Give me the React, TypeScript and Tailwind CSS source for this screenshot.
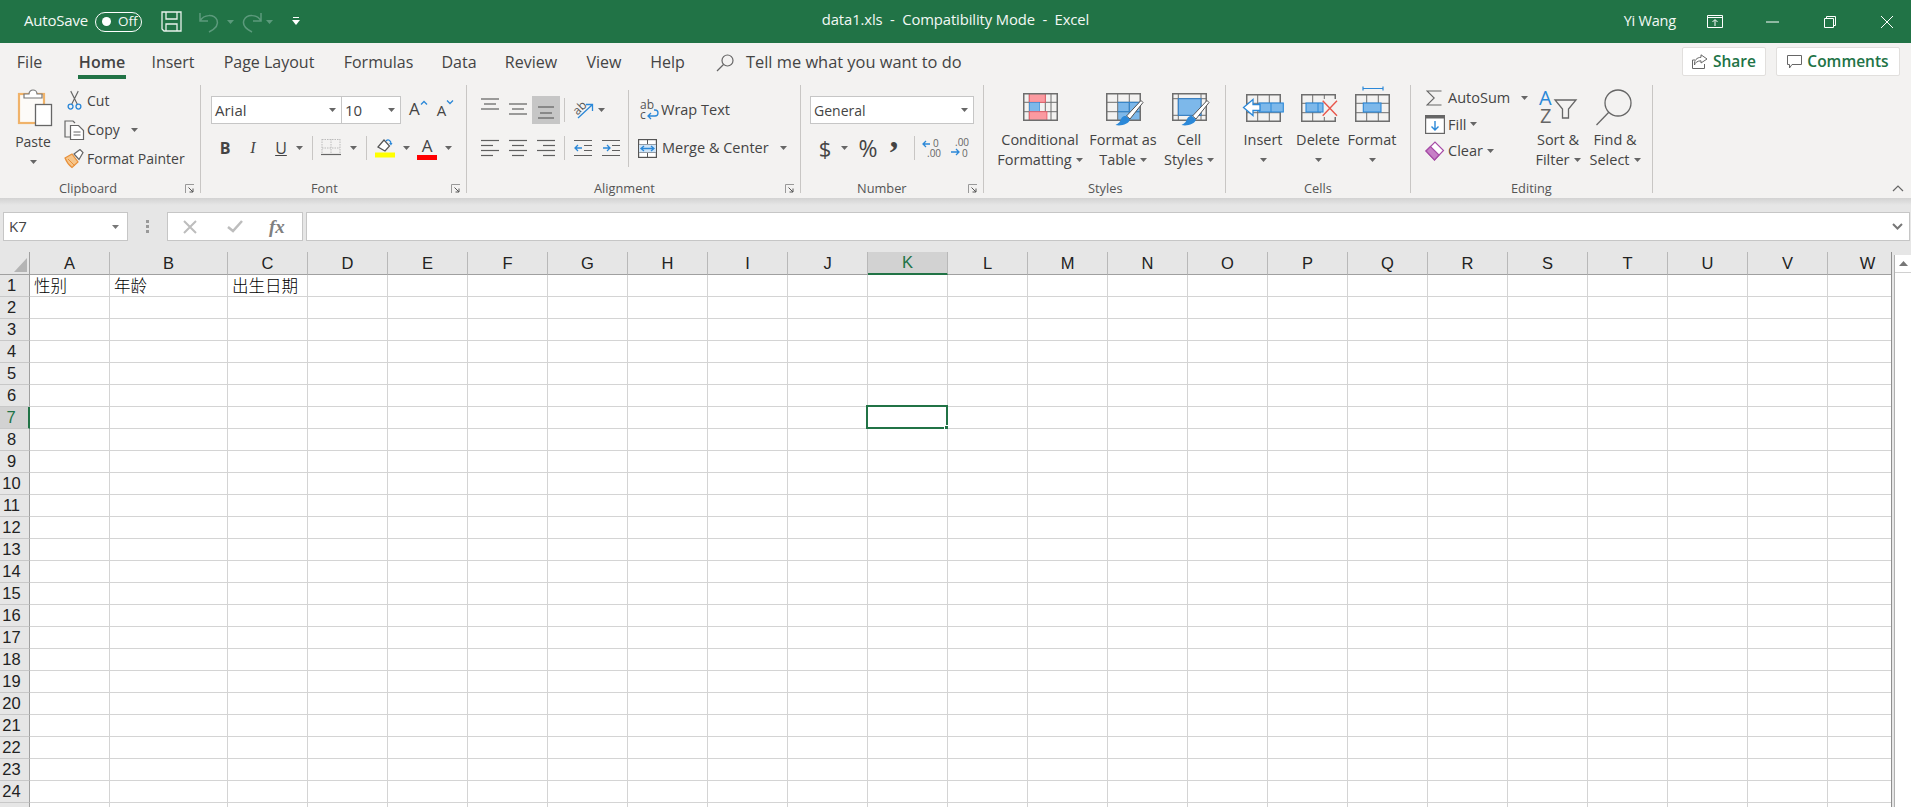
import React from "react";

const COLS = ["A","B","C","D","E","F","G","H","I","J","K","L","M","N","O","P","Q","R","S","T","U","V","W"];
const ROWS = Array.from({ length: 25 }, (_, i) => i + 1);
const TEXTS: Record<string, string> = { A1: "性别", B1: "年龄", C1: "出生日期" };

const G = "#5f5f5f";
const B = "#2b88d8";
const LB = "#7db8ea";
const GL = "#6e6e6e";

function Caret({ c = "#666", className = "" }: { c?: string; className?: string }) {
  return (
    <svg width="7" height="4" viewBox="0 0 7 4" className={className}>
      <path d="M0 0h7L3.5 4z" fill={c} />
    </svg>
  );
}

function Lines({ ys }: { ys: [number, number][] }) {
  return (
    <svg width="18" height="28" viewBox="0 0 18 28">
      {ys.map(([y, x], i) => (
        <path key={i} d={`M${x} ${y}H${18 - x}`} stroke={G} strokeWidth="1.2" />
      ))}
    </svg>
  );
}

function LinesL({ rows }: { rows: [number, number][] }) {
  return (
    <svg width="18" height="20" viewBox="0 0 18 20">
      {rows.map(([a, b], i) => (
        <path key={i} d={`M${a} ${2.5 + i * 5}H${b}`} stroke={G} strokeWidth="1.2" />
      ))}
    </svg>
  );
}

function Launcher() {
  return (
    <svg width="10" height="10" viewBox="0 0 10 10">
      <path d="M0.5 9V.5H9" fill="none" stroke="#999" />
      <path d="M3.5 3.5L8 8M8 4.5V8H4.5" fill="none" stroke="#555" />
    </svg>
  );
}

function PasteIcon() {
  return (
    <svg width="40" height="42" viewBox="0 0 40 42">
      <rect x="4" y="6" width="25" height="29" fill="#fdfbf8" stroke="#f0b36a" strokeWidth="2.2" />
      <path d="M9 10V6h5a4 4 0 0 1 8 0h5v4z" fill="#fff" stroke="#777" strokeWidth="1.2" />
      <rect x="20.5" y="16.5" width="16" height="21" fill="#fff" stroke="#666" strokeWidth="1.3" />
    </svg>
  );
}
function CutIcon() {
  return (
    <svg width="15" height="21" viewBox="0 0 16 22">
      <path d="M4 1l7 14M12 1L5 15" stroke="#666" strokeWidth="1.2" fill="none" />
      <circle cx="3.8" cy="17.5" r="2.6" fill="none" stroke={B} strokeWidth="1.4" />
      <circle cx="12.2" cy="17.5" r="2.6" fill="none" stroke={B} strokeWidth="1.4" />
    </svg>
  );
}
function CopyIcon() {
  return (
    <svg width="21" height="20" viewBox="0 0 21 20">
      <path d="M6 17H1V1h8l2 2" fill="none" stroke="#666" strokeWidth="1.2" />
      <path d="M6.5 5.5h8l5 5v9h-13z" fill="#fff" stroke="#666" strokeWidth="1.2" />
      <path d="M9.5 12h7M9.5 15h7" stroke="#666" />
    </svg>
  );
}
function PainterIcon() {
  return (
    <svg width="21" height="20" viewBox="0 0 21 20">
      <path d="M1 9l7-4 6 8-6 5.5C6 17 3 14 1 9z" fill="#f6c58a" stroke="#e8903a" strokeWidth="1.2" />
      <path d="M4 10l7 7" stroke="#e8903a" />
      <path d="M10 5l6-4.5 3 3-4 7z" fill="#fff" stroke="#666" strokeWidth="1.2" />
    </svg>
  );
}
function BorderIcon() {
  return (
    <svg width="20" height="20" viewBox="0 0 20 20">
      <path d="M1 1.5H19M1 10H19M10 1V16M1 1V16M19 1V16" stroke="#bbb" strokeDasharray="1.5 1" fill="none" />
      <path d="M0 16.5H20" stroke="#666" strokeWidth="1.2" />
    </svg>
  );
}
function FillIcon() {
  return (
    <svg width="20" height="20" viewBox="0 0 20 20">
      <path d="M3 9l6-7 5.5 6L10 13z" fill="#fff" stroke="#555" strokeWidth="1.2" />
      <path d="M11 3c2-2 5-1 5 3" fill="none" stroke={B} strokeWidth="1.3" />
      <path d="M14 5l2 2.5L17.5 5z" fill={B} />
      <rect x="0" y="14.5" width="20" height="5" fill="#ffff00" />
    </svg>
  );
}
function OrientIcon() {
  return (
    <svg width="22" height="20" viewBox="0 0 22 20" className="overflow-visible">
      <text x="1" y="13" fontSize="12" fill="#555" fontFamily="Open Sans, sans-serif" transform="rotate(-45 6 10)">ab</text>
      <path d="M5 18L19 5M13 4.5h6.5V11" fill="none" stroke={B} strokeWidth="1.3" />
    </svg>
  );
}
function WrapIcon() {
  return (
    <svg width="20" height="22" viewBox="0 0 20 22" className="overflow-visible">
      <text x="0" y="10" fontSize="12" fill="#555" fontFamily="Open Sans, sans-serif">ab</text>
      <text x="0" y="20" fontSize="12" fill="#555" fontFamily="Open Sans, sans-serif">c</text>
      <path d="M8 17h7c4 0 4-6 0-6h-1M11 14l-3 3 3 3" fill="none" stroke={B} strokeWidth="1.3" />
    </svg>
  );
}
function IndentIcon({ flip }: { flip?: boolean }) {
  return (
    <svg width="18" height="20" viewBox="0 0 18 20">
      <path d="M0 2.5H18M10 7.5H18M10 12.5H18M0 17.5H18" stroke={G} strokeWidth="1.2" />
      {flip ? (
        <path d="M1 10H8M5 7l3 3-3 3" fill="none" stroke={B} strokeWidth="1.3" />
      ) : (
        <path d="M8 10H1M4 7l-3 3 3 3" fill="none" stroke={B} strokeWidth="1.3" />
      )}
    </svg>
  );
}
function MergeIcon() {
  return (
    <svg width="19" height="19" viewBox="0 0 19 19">
      <rect x=".6" y=".6" width="17.8" height="17.8" fill="#fff" stroke="#555" strokeWidth="1.2" />
      <path d="M1 5.5H18M1 13.5H18M9.5 1V5M9.5 14V18" stroke="#555" />
      <rect x="1" y="5.5" width="17" height="8" fill="#cfe4f7" />
      <path d="M3 9.5H16M6 7l-3 2.5L6 12M13 7l3 2.5L13 12" fill="none" stroke={B} strokeWidth="1.3" />
    </svg>
  );
}
function DecIcon({ inc }: { inc?: boolean }) {
  const f = { fontSize: 10, fill: "#666", fontFamily: "Open Sans, sans-serif" };
  return (
    <svg width="20" height="20" viewBox="0 0 20 20" className="overflow-visible">
      {inc ? (
        <>
          <path d="M8 6H1M4 3L1 6l3 3" fill="none" stroke={B} strokeWidth="1.3" />
          <text x="11" y="9" {...f}>0</text>
          <text x="5" y="19" {...f}>.00</text>
        </>
      ) : (
        <>
          <text x="5" y="8" {...f}>.00</text>
          <path d="M1 14H9M6 11l3 3-3 3" fill="none" stroke={B} strokeWidth="1.3" />
          <text x="12" y="19" {...f}>0</text>
        </>
      )}
    </svg>
  );
}

function Outer() {
  return <path d="M.75 .75H34.25V27.25H.75z" fill="none" stroke={GL} strokeWidth="1.5" />;
}
function GridLines() {
  return <path d="M0 9.3H35M0 18.7H35M11.7 0V28M23.3 0V28" stroke={GL} strokeWidth="1" />;
}
function Brush() {
  return (
    <>
      <path d="M35 7.5L37 9.5 24 26 20.5 23z" fill="#fff" stroke="#555" strokeWidth="1" />
      <path d="M20 23L24 26.5C23 31 15 33.5 9.5 32 13 30 14 29 15 26 16 23.5 18 23 20 23z" fill={B} />
    </>
  );
}
function GI({ children }: { children: React.ReactNode }) {
  return (
    <svg width="35" height="28" viewBox="0 0 35 28" className="overflow-visible">
      {children}
    </svg>
  );
}
function CondIcon() {
  return (
    <GI>
      <path d="M0 9.3H35M0 18.7H35M6.3 0V28M22.3 0V28M28 0V28" stroke={GL} strokeWidth="1" />
      <rect x="6.3" y="0.5" width="16" height="8.8" fill="#fb9aa0" stroke="#ea5b66" strokeWidth=".9" />
      <rect x="6.3" y="9.3" width="10.4" height="9.4" fill={LB} stroke={B} strokeWidth=".6" />
      <rect x="6.3" y="18.7" width="17.6" height="8.8" fill="#fb9aa0" stroke="#ea5b66" strokeWidth=".9" />
      <Outer />
    </GI>
  );
}
function TableIcon() {
  return (
    <GI>
      <rect x="11.7" y="9.3" width="23.3" height="18.7" fill={LB} />
      <GridLines />
      <path d="M11.7 9.3H35M11.7 18.7H35M23.3 9.3V28" stroke={B} />
      <Outer />
      <Brush />
    </GI>
  );
}
function StylesIcon() {
  return (
    <GI>
      <path d="M0 5.7H35M0 22.3H35M6.3 0V28M29 0V28" stroke={GL} />
      <rect x="6.3" y="5.7" width="22.7" height="16.6" fill={LB} stroke="#2b7cc8" />
      <Outer />
      <Brush />
    </GI>
  );
}
function InsertIcon() {
  return (
    <GI>
      <GridLines />
      <Outer />
      <rect x="13" y="9" width="24.3" height="9" fill={LB} stroke={B} strokeWidth="1.1" />
      <path d="M25 9V18" stroke={B} />
      <path d="M7 5.5L-2.5 13.5 7 21.5V16.5H14V10.5H7z" fill="#fff" stroke={B} strokeWidth="1.3" />
    </GI>
  );
}
function DeleteIcon() {
  return (
    <GI>
      <GridLines />
      <Outer />
      <rect x="20" y="5" width="17" height="18" fill="#f3f2f1" />
      <rect x="5" y="9" width="17" height="9" fill={LB} stroke={B} strokeWidth="1.1" />
      <path d="M17 9V18" stroke={B} />
      <path d="M21.7 6.7L36 21.7M36 6.7L21.7 21.7" stroke="#e8574c" strokeWidth="1.4" />
    </GI>
  );
}
function FormatIcon() {
  return (
    <GI>
      <path d="M8 -5.5H28M8 -7.5V-3.5M28 -7.5V-3.5" stroke={B} strokeWidth="1.2" />
      <GridLines />
      <Outer />
      <rect x="8.3" y="9" width="17.7" height="9" fill={LB} stroke={B} strokeWidth="1.1" />
    </GI>
  );
}
function SigmaIcon() {
  return (
    <svg width="16" height="16" viewBox="0 0 16 16" fill="none" stroke="#666" strokeWidth="1.1">
      <path d="M15.5 1H1L8.2 8 1 15H15.5" />
    </svg>
  );
}
function FillDownIcon() {
  return (
    <svg width="20" height="19" viewBox="0 0 20 19">
      <rect x=".6" y=".6" width="18.8" height="17.8" fill="#fff" stroke="#666" strokeWidth="1.2" />
      <rect x="1" y="1" width="18" height="2.5" fill="#666" />
      <path d="M10 6v9M6.5 11.5L10 15l3.5-3.5" fill="none" stroke={B} strokeWidth="1.4" />
    </svg>
  );
}
function ClearIcon() {
  return (
    <svg width="20" height="20" viewBox="0 0 20 20">
      <path d="M1 10l9-9 8.5 8.5L9.5 19z" fill="#fff" stroke="#a64ca6" strokeWidth="1.2" />
      <path d="M1 10l4.5-4.5 8.5 8.5-4.5 5z" fill="#c77fc7" stroke="#a64ca6" strokeWidth="1.2" />
    </svg>
  );
}
function SortIcon() {
  return (
    <svg width="44" height="38" viewBox="0 0 44 38" className="overflow-visible">
      <text x="3" y="16" fontSize="20" fill={B} fontFamily="Open Sans, sans-serif">A</text>
      <text x="4" y="34" fontSize="20" fill="#666" fontFamily="Open Sans, sans-serif">Z</text>
      <path d="M19 11H40L32.5 20V29H26.5V20z" fill="none" stroke="#666" strokeWidth="1.3" />
    </svg>
  );
}
function FindIcon() {
  return (
    <svg width="38" height="38" viewBox="0 0 38 38">
      <circle cx="22" cy="14" r="13" fill="none" stroke="#666" strokeWidth="1.3" />
      <path d="M12.8 23.2L0.5 36" stroke="#666" strokeWidth="1.3" />
    </svg>
  );
}

function Group({ w, label, children, labelMl, launcher }: { w: string; label: string; children: React.ReactNode; labelMl: string; launcher?: boolean }) {
  return (
    <section className={`${w} shrink-0 h-[108px] border-r border-[#c8c6c4]`}>
      <div className="h-[92px] flex">{children}</div>
      <div className="h-[24px] flex items-center text-[12.8px] text-[#555]">
        <span className={labelMl}>{label}</span>
        {launcher && <span className="ml-auto mr-[5px] flex"><Launcher /></span>}
      </div>
    </section>
  );
}

function Tab({ label, w, active }: { label: string; w: string; active?: boolean }) {
  return (
    <div className={`${w} shrink-0 h-[39px] flex flex-col items-center pt-[8px] ${active ? "font-semibold text-[#444]" : "text-[#444]"}`}>
      <span className="leading-[22px] whitespace-nowrap">{label}</span>
      {active && <span className="mt-[2px] w-[48px] h-[4px] bg-[#217346]" />}
    </div>
  );
}

function BigBtn({ w, icon, l1, l2, iconH, gap }: { w: string; icon: React.ReactNode; l1: string; l2?: string; iconH: string; gap: string }) {
  return (
    <div className={`${w} shrink-0 flex flex-col items-center text-[14.5px] text-[#444]`}>
      <div className={`${iconH} flex items-start justify-center`}>{icon}</div>
      <div className={`${gap} leading-[20px] h-[20px] whitespace-nowrap`}>{l1}</div>
      <div className="leading-[20px] h-[20px] whitespace-nowrap flex items-center gap-[4px]">
        {l2}
        <Caret />
      </div>
    </div>
  );
}

export default function App() {
  return (
    <div className="w-[1911px] h-[807px] overflow-hidden bg-[#e6e6e6] font-['Open_Sans',sans-serif] text-[#444] flex flex-col">
      {/* Title bar */}
      <header className="h-[43px] shrink-0 bg-[#217346] text-[#f3f8f5] grid grid-cols-[1fr_auto_1fr] items-center text-[14px]">
        <div className="flex items-center pl-[24px]">
          <span className="text-[15px] tracking-[-0.2px] mb-[2px]">AutoSave</span>
          <div className="ml-[7px] w-[47px] h-[20px] rounded-full border border-white flex items-center pl-[6px]">
            <span className="w-[9px] h-[9px] rounded-full bg-white" />
            <span className="ml-[7px] text-[13.5px] leading-none">Off</span>
          </div>
          <svg className="ml-[19px]" width="21" height="21" viewBox="0 0 21 21" fill="none" stroke="#e8f2ec" strokeWidth="1.3">
            <path d="M1 1H20V20H3L1 18z" />
            <path d="M5 1V8H16V1M5 20V13H16V20" />
          </svg>
          <svg className="ml-[16px]" width="24" height="22" viewBox="0 0 24 22" fill="none" stroke="#5c9a7c" strokeWidth="1.5">
            <path d="M2 2V10H10M2 10C6 3 16 3 19 9c2 5-2 9-8 12" />
          </svg>
          <Caret c="#5c9a7c" className="ml-[5px]" />
          <svg className="ml-[5px]" width="24" height="22" viewBox="0 0 24 22" fill="none" stroke="#5c9a7c" strokeWidth="1.5">
            <path d="M22 2V10H14M22 10C18 3 8 3 5 9c-2 5 2 9 8 12" />
          </svg>
          <Caret c="#5c9a7c" className="ml-[3px]" />
          <svg className="ml-[19px]" width="8" height="9" viewBox="0 0 8 9">
            <path d="M1 .5H7" stroke="#fff" />
            <path d="M0 3h8L4 8z" fill="#fff" />
          </svg>
        </div>
        <div className="whitespace-pre text-[14.8px] tracking-[-0.1px] mb-[4px]">data1.xls  -  Compatibility Mode  -  Excel</div>
        <div className="flex items-center justify-end">
          <span className="text-[14.5px] tracking-[-0.2px] mb-[2px]">Yi Wang</span>
          <svg className="ml-[31px]" width="16" height="13" viewBox="0 0 16 13" fill="none" stroke="#fff">
            <path d="M.5 .5H15.5V12.5H.5zM1 2.5H15M8 11V5M5.5 7L8 4.5 10.5 7" />
          </svg>
          <svg className="ml-[43px]" width="13" height="2" viewBox="0 0 13 2"><path d="M0 1H13" stroke="#fff" /></svg>
          <svg className="ml-[45px]" width="12" height="12" viewBox="0 0 12 12" fill="none" stroke="#fff">
            <path d="M.5 2.5H9.5V11.5H.5zM2.5 2.5V.5H11.5V9.5H9.5" />
          </svg>
          <svg className="ml-[45px] mr-[18px]" width="12" height="12" viewBox="0 0 12 12" fill="none" stroke="#fff">
            <path d="M0 0L12 12M12 0L0 12" />
          </svg>
        </div>
      </header>

      {/* Tabs */}
      <nav className="h-[39px] shrink-0 bg-[#f3f2f1] flex items-start text-[16px] pl-[17px]">
        <Tab label="File" w="w-[25px]" />
        <Tab label="Home" w="w-[48px] ml-[36px]" active />
        <Tab label="Insert" w="w-[42px] ml-[26px]" />
        <Tab label="Page Layout" w="w-[92px] ml-[29px]" />
        <Tab label="Formulas" w="w-[69px] ml-[29px]" />
        <Tab label="Data" w="w-[36px] ml-[28px]" />
        <Tab label="Review" w="w-[52px] ml-[28px]" />
        <Tab label="View" w="w-[36px] ml-[29px]" />
        <Tab label="Help" w="w-[35px] ml-[28px]" />
        <svg className="ml-[31px] mt-[11px]" width="18" height="18" viewBox="0 0 18 18" fill="none" stroke="#666" strokeWidth="1.2">
          <circle cx="11.5" cy="6.5" r="5.5" />
          <path d="M7.5 10.5L1 17" />
        </svg>
        <span className="ml-[12px] mt-[8px] leading-[22px] whitespace-nowrap text-[16.4px]">Tell me what you want to do</span>
        <div className="ml-auto mt-[4px] flex mr-[11px] text-[#217346] font-semibold text-[15.5px]">
          <button className="w-[84px] h-[29px] bg-white border border-[#e1dfdd] rounded-[2px] flex items-center justify-center gap-[5px]">
            <svg width="16" height="15" viewBox="0 0 16 15" fill="none" stroke="#666">
              <path d="M9 .8L15 5l-6 4V6.8C5 6.8 3 9 2.5 11 2 6 5 3.5 9 3.3zM3 6H.5V14.5H12.5V10" />
            </svg>
            Share
          </button>
          <button className="ml-[10px] w-[124px] h-[29px] bg-white border border-[#e1dfdd] rounded-[2px] flex items-center justify-center gap-[5px]">
            <svg width="15" height="14" viewBox="0 0 15 14" fill="none" stroke="#666">
              <path d="M.5 .5H14.5V9.5H5L2.5 13V9.5H.5z" />
            </svg>
            Comments
          </button>
        </div>
      </nav>

      {/* Ribbon */}
      <div className="h-[116px] shrink-0 bg-[#f3f2f1] pt-[3px] flex relative">
        <Group w="w-[201px]" label="Clipboard" labelMl="ml-[59px]" launcher>
          <div className="w-[66px] flex flex-col items-center text-[14px]">
            <div className="ml-[4px] mt-[3px]"><PasteIcon /></div>
            <div className="mt-[2px] leading-[20px]">Paste</div>
            <Caret className="mt-[8px]" />
          </div>
          <div className="flex flex-col pt-[1px] text-[14px] -ml-[2px]">
            <div className="h-[29px] flex items-center"><span className="w-[23px] flex pl-[3px]"><CutIcon /></span><span>Cut</span></div>
            <div className="h-[29px] flex items-center"><span className="w-[23px] flex"><CopyIcon /></span><span>Copy</span><Caret className="ml-[11px]" /></div>
            <div className="h-[29px] flex items-center"><span className="w-[23px] flex"><PainterIcon /></span><span className="whitespace-nowrap">Format Painter</span></div>
          </div>
        </Group>

        <Group w="w-[266px]" label="Font" labelMl="ml-[110px]" launcher>
          <div className="pl-[10px] pt-[11px] flex flex-col">
            <div className="flex items-center h-[28px]">
              <div className="w-[131px] h-[28px] bg-white border border-[#c6c6c6] flex items-center justify-between pl-[3px] pr-[5px] text-[15px]">Arial<Caret /></div>
              <div className="w-[60px] h-[28px] -ml-px bg-white border border-[#c6c6c6] flex items-center justify-between pl-[3px] pr-[5px] text-[15px]">10<Caret /></div>
              <div className="ml-[8px] flex items-start h-[20px] text-[17px] leading-[20px] -mt-[2px]">A<svg className="mt-[1px]" width="8" height="5" viewBox="0 0 8 5" fill="none" stroke={B} strokeWidth="1.3"><path d="M1 4.5L4 1.5 7 4.5" /></svg></div>
              <div className="ml-[9px] flex items-start h-[20px] text-[15px] leading-[20px] -mt-[1px]">A<svg width="8" height="5" viewBox="0 0 8 5" fill="none" stroke={B} strokeWidth="1.3"><path d="M1 .5L4 3.5 7 .5" /></svg></div>
            </div>
            <div className="flex items-center h-[40px] mt-[4px]">
              <span className="ml-[7px] w-[14px] text-center font-bold text-[16px]">B</span>
              <span className="ml-[14px] w-[14px] text-center italic text-[16px] font-['Liberation_Serif',serif]">I</span>
              <span className="ml-[14px] w-[14px] text-center text-[16px] underline">U</span>
              <Caret className="ml-[8px]" />
              <span className="ml-[9px] w-px h-[24px] bg-[#c8c6c4]" />
              <span className="ml-[8px] flex"><BorderIcon /></span>
              <Caret className="ml-[9px]" />
              <span className="ml-[9px] w-px h-[24px] bg-[#c8c6c4]" />
              <span className="ml-[8px] flex"><FillIcon /></span>
              <Caret className="ml-[8px]" />
              <span className="ml-[7px] w-[20px] flex flex-col items-center leading-none text-[17px]">
                A
                <span className="w-[20px] h-[5px] bg-[#ff0000] mt-[1px]" />
              </span>
              <Caret className="ml-[8px]" />
            </div>
          </div>
        </Group>

        <Group w="w-[334px]" label="Alignment" labelMl="ml-[127px]" launcher>
          <div className="pl-[14px] flex flex-col">
            <div className="flex items-center h-[28px] mt-[11px]">
              <span className="flex"><Lines ys={[[3, 0], [8, 3], [13, 0]]} /></span>
              <span className="ml-[10px] flex"><Lines ys={[[8, 0], [13, 3], [18, 0]]} /></span>
              <span className="ml-[5px] w-[28px] h-[28px] bg-[#c6c6c6] flex items-center justify-center"><Lines ys={[[11, 1], [17, 3], [22, 1]]} /></span>
              <span className="ml-[4px] w-px h-[24px] bg-[#c8c6c4]" />
              <span className="ml-[8px] flex"><OrientIcon /></span>
              <Caret className="ml-[3px]" />
            </div>
            <div className="flex items-center h-[40px] mt-[4px]">
              <span className="flex"><LinesL rows={[[0, 18], [0, 12], [0, 18], [0, 12]]} /></span>
              <span className="ml-[10px] flex"><LinesL rows={[[0, 18], [3, 15], [0, 18], [3, 15]]} /></span>
              <span className="ml-[10px] flex"><LinesL rows={[[0, 18], [6, 18], [0, 18], [6, 18]]} /></span>
              <span className="ml-[9px] w-px h-[24px] bg-[#c8c6c4]" />
              <span className="ml-[9px] flex"><IndentIcon /></span>
              <span className="ml-[10px] flex"><IndentIcon flip /></span>
            </div>
          </div>
          <span className="ml-[8px] mt-[5px] w-px h-[77px] bg-[#c8c6c4]" />
          <div className="flex flex-col text-[14.5px]">
            <div className="flex items-center h-[28px] mt-[11px] ml-[11px]"><WrapIcon /><span className="ml-[1px] whitespace-nowrap">Wrap Text</span></div>
            <div className="flex items-center h-[40px] mt-[4px] ml-[9px]"><MergeIcon /><span className="ml-[5px] whitespace-nowrap">Merge &amp; Center</span><Caret className="ml-[11px]" /></div>
          </div>
        </Group>

        <Group w="w-[183px]" label="Number" labelMl="ml-[56px]" launcher>
          <div className="pl-[9px] flex flex-col">
            <div className="mt-[11px] w-[164px] h-[28px] bg-white border border-[#c6c6c6] flex items-center justify-between pl-[3px] pr-[5px] text-[14px]">General<Caret /></div>
            <div className="flex items-center h-[40px] mt-[4px]">
              <span className="ml-[8px] w-[14px] text-center text-[22px] leading-none">$</span>
              <Caret className="ml-[9px]" />
              <span className="ml-[10px] w-[20px] text-center text-[23px] leading-none">%</span>
              <span className="ml-[10px] w-[12px] text-center font-['Liberation_Serif',serif] font-bold text-[34px] leading-none -mt-[24px]">,</span>
              <span className="ml-[14px] w-px h-[24px] bg-[#c8c6c4]" />
              <span className="ml-[7px] flex"><DecIcon inc /></span>
              <span className="ml-[8px] flex"><DecIcon /></span>
            </div>
          </div>
        </Group>

        <Group w="w-[242px]" label="Styles" labelMl="ml-[104px]">
          <div className="flex pl-[13px] pt-[8px]">
            <BigBtn w="w-[86px]" icon={<CondIcon />} l1="Conditional" l2="Formatting" iconH="h-[30px]" gap="mt-[7px]" />
            <BigBtn w="w-[66px] ml-[7px]" icon={<TableIcon />} l1="Format as" l2="Table" iconH="h-[30px]" gap="mt-[7px]" />
            <BigBtn w="w-[50px] ml-[8px]" icon={<StylesIcon />} l1="Cell" l2="Styles" iconH="h-[30px]" gap="mt-[7px]" />
          </div>
        </Group>

        <Group w="w-[185px]" label="Cells" labelMl="ml-[78px]">
          <div className="flex pl-[18px] pt-[9px]">
            <BigBtn w="w-[38px]" icon={<InsertIcon />} l1="Insert" iconH="h-[30px]" gap="mt-[6px]" />
            <BigBtn w="w-[46px] ml-[13px]" icon={<DeleteIcon />} l1="Delete" iconH="h-[30px]" gap="mt-[6px]" />
            <BigBtn w="w-[48px] ml-[7px]" icon={<FormatIcon />} l1="Format" iconH="h-[30px]" gap="mt-[6px]" />
          </div>
        </Group>

        <Group w="w-[242px]" label="Editing" labelMl="ml-[100px]">
          <div className="flex flex-col pl-[14px] text-[14.5px] w-[124px]">
            <div className="flex items-center h-[26px]">
              <span className="w-[23px] flex pl-[1px]"><SigmaIcon /></span>
              <span className="whitespace-nowrap">AutoSum</span>
              <Caret className="ml-[11px]" />
            </div>
            <div className="flex items-center h-[26px]">
              <span className="w-[23px] flex"><FillDownIcon /></span>
              <span className="pt-[1px]">Fill</span>
              <Caret className="ml-[4px]" />
            </div>
            <div className="flex items-center h-[27px]">
              <span className="w-[23px] flex"><ClearIcon /></span>
              <span className="pt-[1px]">Clear</span>
              <Caret className="ml-[4px]" />
            </div>
          </div>
          <div className="flex pt-[4px]">
            <BigBtn w="w-[46px]" icon={<SortIcon />} l1="Sort &" l2="Filter" iconH="h-[37px]" gap="mt-[4px]" />
            <BigBtn w="w-[54px] ml-[7px]" icon={<FindIcon />} l1="Find &" l2="Select" iconH="h-[37px]" gap="mt-[4px]" />
          </div>
        </Group>

        <svg className="absolute right-[7px] bottom-[6px]" width="12" height="7" viewBox="0 0 12 7" fill="none" stroke="#666" strokeWidth="1.2">
          <path d="M1 6L6 1l5 5" />
        </svg>
      </div>

      <div className="h-[7px] shrink-0 bg-linear-to-b from-[#d2d2d2] to-[#e6e6e6]" />

      {/* Formula bar */}
      <div className="h-[47px] shrink-0 flex items-start pt-[7px] text-[#444]">
        <div className="ml-[3px] w-[125px] h-[29px] bg-white border border-[#c6c6c6] flex items-center justify-between pl-[5px] pr-[8px] text-[15px]">K7<Caret c="#777" /></div>
        <div className="w-[39px] h-[29px] flex flex-col items-center justify-center gap-[2px]">
          <span className="w-[3px] h-[3px] bg-[#999]" />
          <span className="w-[3px] h-[3px] bg-[#999]" />
          <span className="w-[3px] h-[3px] bg-[#999]" />
        </div>
        <div className="w-[136px] h-[29px] bg-white border border-[#c6c6c6] flex items-center">
          <svg className="ml-[15px]" width="14" height="14" viewBox="0 0 14 14" fill="none" stroke="#bdbdbd" strokeWidth="2"><path d="M1 1L13 13M13 1L1 13" /></svg>
          <svg className="ml-[30px]" width="16" height="13" viewBox="0 0 16 13" fill="none" stroke="#bdbdbd" strokeWidth="2.5"><path d="M1 7l5 4L15 1" /></svg>
          <span className="ml-[26px] font-['Liberation_Serif',serif] italic font-bold text-[#808080] text-[19px] leading-none">fx</span>
        </div>
        <div className="ml-[3px] flex-1 mr-[1px] h-[29px] bg-white border border-[#c6c6c6] flex items-center justify-end pr-[6px]">
          <svg width="11" height="7" viewBox="0 0 11 7" fill="none" stroke="#777" strokeWidth="2"><path d="M1 1l4.5 4.5L10 1" /></svg>
        </div>
      </div>

      {/* Sheet */}
      <div className="flex-1 flex min-h-0">
        <div className="w-[1892px] shrink-0 overflow-hidden font-['Liberation_Sans',sans-serif] border-r border-[#8f8f8f] text-[16.5px]">
          <div className="flex h-[23px] w-[2000px]">
            <div className="w-[30px] shrink-0 border-b border-r border-[#a0a0a0] pl-[14px] pt-[6px]">
              <svg width="13" height="14" viewBox="0 0 13 14"><path d="M13 0V14H0z" fill="#b4b4b4" /></svg>
            </div>
            {COLS.map((c) => (
              <div
                key={c}
                className={`${c === "B" ? "w-[118px]" : "w-[80px]"} shrink-0 flex items-center justify-center border-r border-[#b8b8b8] ${
                  c === "K" ? "bg-[#d2d2d2] text-[#217346] border-b-2 border-b-[#217346]" : "border-b border-b-[#a0a0a0] text-[#222]"
                }`}
              >
                {c}
              </div>
            ))}
          </div>
          {ROWS.map((r) => (
            <div key={r} className="flex h-[22px] w-[2000px]">
              <div
                className={`w-[30px] shrink-0 flex items-center justify-center pr-[6px] border-b border-b-[#c8c8c8] ${
                  r === 7 ? "bg-[#d2d2d2] text-[#217346] border-r-2 border-r-[#217346]" : "border-r border-r-[#a0a0a0] text-[#222]"
                }`}
              >
                {r}
              </div>
              {COLS.map((c) => (
                <div
                  key={c}
                  className={`${c === "B" ? "w-[118px]" : "w-[80px]"} shrink-0 relative bg-white border-r border-b border-[#d4d4d4] pl-[4px] leading-[20px] whitespace-nowrap text-[#000] font-['Noto_Sans_CJK_SC',sans-serif] font-light`}
                >
                  {TEXTS[`${c}${r}`]}
                  {c === "K" && r === 7 && (
                    <div className="absolute -left-[2px] -top-[2px] w-[82px] h-[24px] border-2 border-[#217346]">
                      <span className="absolute -right-[5px] -bottom-[5px] w-[7px] h-[7px] bg-[#217346] border border-white" />
                    </div>
                  )}
                </div>
              ))}
            </div>
          ))}
        </div>
        <div className="flex-1 pl-[2px] pt-[3px]">
          <div className="h-full bg-white border-l border-[#b0b0b0]">
            <div className="h-[18px] flex items-center justify-center border-b border-[#d0d0d0]">
              <svg width="9" height="5" viewBox="0 0 9 5"><path d="M0 5L4.5 0 9 5z" fill="#777" /></svg>
            </div>
          </div>
        </div>
      </div>
    </div>
  );
}
